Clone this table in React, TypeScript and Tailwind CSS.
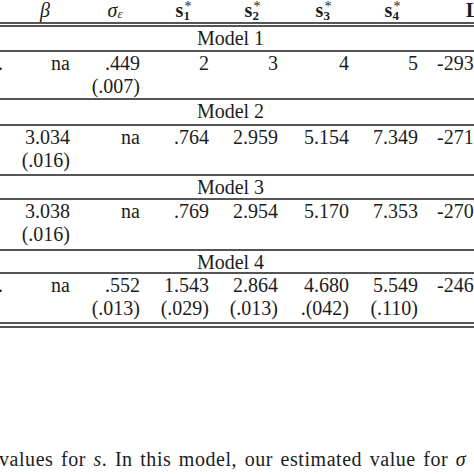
import React from "react";

type Cell = string | string[];

const COLS = "grid grid-cols-[3px_67px_70px_69px_69px_71px_69px_1fr]";

function Rule() {
  return <div className="h-[2px] w-[520px] bg-[#555555]" />;
}

function DataRow({ cells, h }: { cells: Cell[]; h: string }) {
  return (
    <div className={`${COLS} ${h}`}>
      {cells.map((c, i) => {
        const lines = Array.isArray(c) ? c : [c];
        const last = i === cells.length - 1;
        return (
          <div
            key={i}
            className={
              last
                ? "flex flex-col items-start pl-[19px] whitespace-nowrap"
                : "flex flex-col items-end whitespace-nowrap"
            }
          >
            {lines.map((l, j) => (
              <span key={j} className="block">
                {l}
              </span>
            ))}
          </div>
        );
      })}
    </div>
  );
}

function ModelRow({ label, h }: { label: string; h: string }) {
  return <div className={`w-[461px] text-center ${h}`}>{label}</div>;
}

function SHead({ n }: { n: string }) {
  return (
    <span className="inline-flex items-end">
      <span className="font-bold">s</span>
      <span className="relative inline-block w-[9px] h-[21px]">
        <span className="absolute left-[1px] top-[0px] text-[14px] leading-[14px]">*</span>
        <span className="absolute left-[0px] top-[9px] text-[13px] leading-[14px] font-bold">{n}</span>
      </span>
    </span>
  );
}

function HeadCell({ children }: { children: React.ReactNode }) {
  return (
    <div className="flex justify-end">
      <div className="w-[50px] flex justify-center whitespace-nowrap">{children}</div>
    </div>
  );
}

export default function App() {
  return (
    <div className="w-[474px] h-[474px] overflow-hidden bg-white text-[#1c1c1c] text-[20px] leading-[23px] font-['Liberation_Serif',serif]">
      {/* header */}
      <div className={`${COLS} h-[21px] leading-[21px]`}>
        <div />
        <HeadCell>
          <span className="italic">β</span>
        </HeadCell>
        <HeadCell>
          <span className="inline-flex items-end">
            <span className="italic">σ</span>
            <span className="italic text-[13px] leading-[13px] mb-[1px]">ε</span>
          </span>
        </HeadCell>
        <HeadCell>
          <SHead n="1" />
        </HeadCell>
        <HeadCell>
          <SHead n="2" />
        </HeadCell>
        <HeadCell>
          <SHead n="3" />
        </HeadCell>
        <HeadCell>
          <SHead n="4" />
        </HeadCell>
        <div className="pl-[48px] font-bold whitespace-nowrap">LL</div>
      </div>
      <div className="h-[1px]" />
      <Rule />
      <div className="h-[1px]" />
      <Rule />

      <ModelRow label="Model 1" h="h-[23px]" />
      <Rule />
      <DataRow
        h="h-[46px]"
        cells={[".", "na", [".449", "(.007)"], "2", "3", "4", "5", "-2933.2"]}
      />
      <Rule />

      <ModelRow label="Model 2" h="h-[24px]" />
      <Rule />
      <DataRow
        h="h-[48px]"
        cells={["", ["3.034", "(.016)"], "na", ".764", "2.959", "5.154", "7.349", "-2711.4"]}
      />
      <Rule />

      <ModelRow label="Model 3" h="h-[22px]" />
      <Rule />
      <DataRow
        h="h-[49px]"
        cells={["", ["3.038", "(.016)"], "na", ".769", "2.954", "5.170", "7.353", "-2700.8"]}
      />
      <Rule />

      <ModelRow label="Model 4" h="h-[21px]" />
      <Rule />
      <DataRow
        h="h-[48px]"
        cells={[
          ".",
          "na",
          [".552", "(.013)"],
          ["1.543", "(.029)"],
          ["2.864", "(.013)"],
          ["4.680", ".(042)"],
          ["5.549", "(.110)"],
          "-2466.3",
        ]}
      />
      <Rule />
      <div className="h-[2px]" />
      <Rule />

      <div className="h-[120px]" />
      <div className="whitespace-nowrap -ml-[1px] tracking-[0.55px] [word-spacing:2px]">
        values for <span className="italic">s</span>. In this model, our estimated value for{" "}
        <span className="italic">σ</span>
      </div>
    </div>
  );
}
